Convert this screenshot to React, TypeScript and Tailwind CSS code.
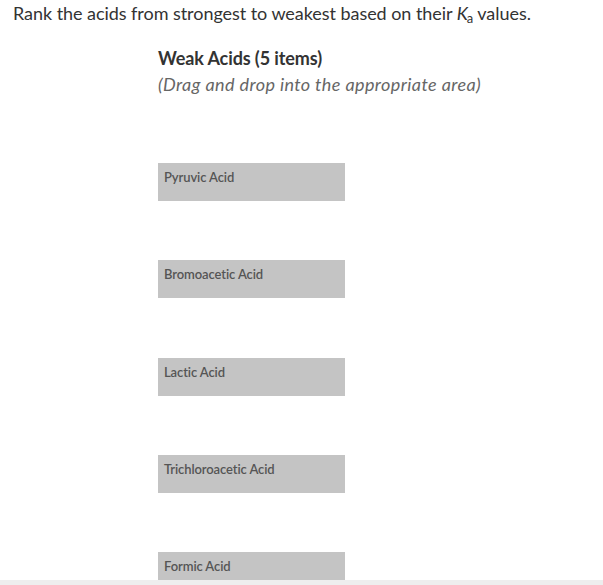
import * as React from "react";

const acids = [
  "Pyruvic Acid",
  "Bromoacetic Acid",
  "Lactic Acid",
  "Trichloroacetic Acid",
  "Formic Acid",
];

export default function App() {
  return (
    <div className="min-h-screen bg-white font-['Lato','Liberation_Sans',sans-serif] text-[#333]">
      {/* Question */}
      <p className="px-[13px] pt-[1px] text-[18px] leading-[24px] tracking-[-0.05px]">
        Rank the acids from strongest to weakest based on their <i>K</i>
        <sub className="relative top-[3px] -ml-[1px] align-baseline text-[13px] leading-none">a</sub> values.
      </p>

      {/* Drag area */}
      <div className="ml-[158px] mt-[21px]">
        <h2 className="text-[18px] leading-[24px] font-bold tracking-[-0.1px] text-[#333]">
          Weak Acids (5 items)
        </h2>
        <p className="mt-[2px] text-[18px] leading-[24px] italic tracking-[0.4px] text-[#666]">
          (Drag and drop into the appropriate area)
        </p>

        <div className="mt-[67px] flex flex-col gap-[59.25px]">
          {acids.map((name) => (
            <div
              key={name}
              className="h-[38px] w-[187px] bg-[#c4c4c4] px-[6px] pt-[6px] text-[13px] leading-[16px] font-semibold tracking-[-0.1px] text-[#555]"
            >
              {name}
            </div>
          ))}
        </div>
      </div>

      {/* bottom bar */}
      <div className="fixed bottom-0 left-0 right-0 h-[5px] bg-[#eeeeee]" />
    </div>
  );
}
